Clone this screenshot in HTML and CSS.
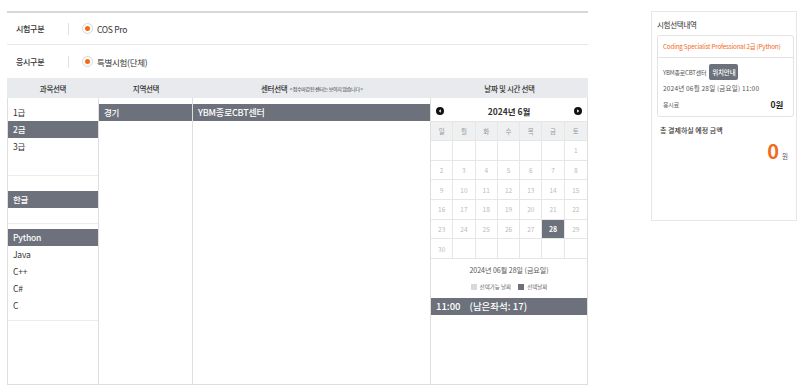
FILE: index.html
```html
<!doctype html>
<html>
<head>
<meta charset="utf-8">
<title>시험접수</title>
<link rel="stylesheet" href="styles.css">
</head>
<body>
<div class="wrap">
  <div class="main">
    <div class="opt-row">
      <div class="opt-label">시험구분</div>
      <div class="opt-value"><span class="radio"></span>COS Pro</div>
    </div>
    <div class="opt-row">
      <div class="opt-label">응시구분</div>
      <div class="opt-value"><span class="radio"></span>특별시험(단체)</div>
    </div>

    <div class="select-table">
      <div class="th">과목선택</div>
      <div class="th">지역선택</div>
      <div class="th">센터선택 <small>&lt; 접수마감된 센터는 보이지 않습니다 &gt;</small></div>
      <div class="th">날짜 및 시간 선택</div>

      <div class="td">
        <ul class="grp g1">
          <li>1급</li>
          <li class="on">2급</li>
          <li>3급</li>
        </ul>
        <ul class="grp g2">
          <li class="on">한글</li>
        </ul>
        <ul class="grp g3">
          <li class="on">Python</li>
          <li>Java</li>
          <li>C++</li>
          <li>C#</li>
          <li>C</li>
        </ul>
      </div>
      <div class="td">
        <ul class="grp g1">
          <li class="on">경기</li>
        </ul>
      </div>
      <div class="td">
        <ul class="grp g1">
          <li class="on big">YBM종로CBT센터</li>
        </ul>
      </div>
      <div class="td cal-col">
        <div class="cal-nav">
          <svg width="8" height="8" viewBox="0 0 8 8"><circle cx="4" cy="4" r="4" fill="#111"/><path d="M4.8 2.2 L2.8 4 L4.8 5.8 Z" fill="#fff"/></svg>
          <span>2024년 6월</span>
          <svg width="8" height="8" viewBox="0 0 8 8"><circle cx="4" cy="4" r="4" fill="#111"/><path d="M3.2 2.2 L5.2 4 L3.2 5.8 Z" fill="#fff"/></svg>
        </div>
        <div class="cal">
          <div class="wd">일</div><div class="wd">월</div><div class="wd">화</div><div class="wd">수</div><div class="wd">목</div><div class="wd">금</div><div class="wd">토</div>
          <div></div><div></div><div></div><div></div><div></div><div></div><div>1</div>
          <div>2</div><div>3</div><div>4</div><div>5</div><div>6</div><div>7</div><div>8</div>
          <div>9</div><div>10</div><div>11</div><div>12</div><div>13</div><div>14</div><div>15</div>
          <div>16</div><div>17</div><div>18</div><div>19</div><div>20</div><div>21</div><div>22</div>
          <div>23</div><div>24</div><div>25</div><div>26</div><div>27</div><div class="sel">28</div><div>29</div>
          <div>30</div><div></div><div></div><div></div><div></div><div></div><div></div>
        </div>
        <div class="cal-date">2024년 06월 28일 (금요일)</div>
        <div class="legend">
          <span class="sq"></span>선택가능 날짜
          <span class="sq dark"></span>선택날짜
        </div>
        <div class="time-slot">11:00<span>(남은좌석: 17)</span></div>
      </div>
    </div>
  </div>

  <div class="side">
    <div class="side-title">시험선택내역</div>
    <div class="card">
      <div class="card-head">Coding Specialist Professional 2급 (Python)</div>
      <div class="card-body">
        <div class="c-row">YBM종로CBT센터 <span class="btn">위치안내</span></div>
        <div class="c-row wide">2024년 06월 28일 (금요일) 11:00</div>
        <div class="c-row fee"><span>응시료</span><b>0원</b></div>
      </div>
    </div>
    <div class="total-label">총 결제하실 예정 금액</div>
    <div class="total"><b>0</b>원</div>
  </div>
</div>
</body>
</html>
```

FILE: styles.css
```css
body {
  margin: 0;
  font-family: "Noto Sans CJK KR", "Noto Sans", sans-serif;
  color: #333;
  background: #fff;
}
ul {
  margin: 0;
  padding: 0;
  list-style: none;
}
.wrap {
  display: flex;
  align-items: flex-start;
  padding-top: 11px;
}
.main {
  width: 581px;
  margin-left: 7px;
  border-top: 2px solid #d6d8db;
}

/* option rows */
.opt-row {
  display: flex;
  align-items: center;
  height: 31px;
  border-bottom: 1px solid #e8e8e8;
}
.opt-row + .opt-row {
  height: 33px;
  border-bottom: none;
}
.opt-label {
  width: 52px;
  padding-left: 9px;
  font-size: 8px;
  font-weight: 500;
  letter-spacing: -0.3px;
  border-right: 1px solid #e2e2e2;
  line-height: 12px;
}
.opt-value {
  display: flex;
  align-items: center;
  margin-left: 13px;
  font-size: 8.5px;
  letter-spacing: -0.3px;
}
.radio {
  width: 9px;
  height: 9px;
  border: 1px solid #d8d8d8;
  border-radius: 50%;
  margin-right: 4px;
  display: flex;
  align-items: center;
  justify-content: center;
  background: #fff;
}
.radio::after {
  content: "";
  width: 5px;
  height: 5px;
  border-radius: 50%;
  background: #f26b1d;
}

/* selection table */
.select-table {
  display: grid;
  grid-template-columns: 92px 94px 238px 157px;
  grid-template-rows: 20px 286px;
  border-bottom: 1px solid #dedede;
}
.th {
  background: #e8eaed;
  font-size: 7.5px;
  font-weight: 500;
  display: flex;
  align-items: center;
  justify-content: center;
  letter-spacing: -0.3px;
}
.th small {
  font-size: 5px;
  font-weight: 400;
  margin-left: 2px;
}
.td {
  border-right: 1px solid #dedede;
}
.td:nth-child(5) {
  border-left: 1px solid #dedede;
}
.grp li {
  height: 17px;
  line-height: 17px;
  padding-left: 5px;
  font-size: 8.5px;
  letter-spacing: -0.2px;
}
.grp li.on {
  background: #6c717b;
  color: #fff;
  font-weight: 500;
}
.grp li.big {
  font-size: 9px;
}
.g1 {
  padding: 6px 0 20px;
}
.g2 {
  border-top: 1px solid #ececec;
  padding: 15px 0 15px;
}
.g3 {
  border-top: 1px solid #ececec;
  padding: 5px 0 6px;
  border-bottom: 1px solid #ececec;
}

/* calendar */
.cal-nav {
  height: 23px;
  display: flex;
  align-items: center;
  justify-content: space-between;
  padding: 3px 5px 0 5px;
  box-sizing: border-box;
}
.cal-nav span {
  font-size: 8.5px;
  font-weight: 700;
}
.cal {
  display: grid;
  grid-template-columns: repeat(7, 1fr);
  grid-template-rows: 19px repeat(6, 19.67px);
  border-top: 1px solid #e6e6e6;
}
.cal div {
  border-right: 1px solid #e6e6e6;
  border-bottom: 1px solid #e6e6e6;
  font-size: 6.5px;
  color: #bbb;
  display: flex;
  align-items: center;
  justify-content: center;
}
.cal div:nth-child(7n) {
  border-right: none;
}
.cal .wd {
  background: #eef0f2;
  color: #999;
}
.cal .sel {
  background: #6c717b;
  color: #fff;
  font-weight: 700;
  font-size: 7px;
}
.cal-date {
  text-align: center;
  font-size: 7px;
  color: #555;
  padding-top: 6px;
  height: 16px;
}
.legend {
  display: flex;
  align-items: center;
  justify-content: center;
  font-size: 5.5px;
  color: #666;
  height: 13px;
}
.sq {
  width: 6px;
  height: 6px;
  background: #d9d9d9;
  margin-right: 3px;
}
.sq.dark {
  background: #6c717b;
  margin-left: 7px;
}
.time-slot {
  margin-top: 4px;
  height: 17px;
  line-height: 17px;
  background: #6c717b;
  color: #fff;
  font-size: 9.5px;
  font-weight: 500;
  padding-left: 5px;
}
.time-slot span {
  margin-left: 9px;
}

/* right panel */
.side {
  width: 146px;
  margin-left: 63px;
  height: 210px;
  border: 1px solid #e6e6e6;
  box-sizing: border-box;
  padding: 0 2px 0 5px;
}
.side-title {
  font-size: 7.5px;
  padding-top: 7px;
  height: 16px;
  letter-spacing: -0.3px;
}
.card {
  border: 1px solid #e3e3e3;
  border-radius: 3px;
  height: 82px;
  box-sizing: border-box;
}
.card-head {
  color: #f26b1d;
  font-size: 6.3px;
  letter-spacing: -0.2px;
  height: 21px;
  line-height: 21px;
  padding-left: 5px;
  border-bottom: 1px solid #e3e3e3;
}
.card-body {
  padding: 6px 5px 0 5px;
}
.c-row {
  font-size: 6px;
  color: #555;
  height: 16px;
  display: flex;
  align-items: center;
  letter-spacing: -0.2px;
}
.c-row.wide {
  font-size: 6.5px;
  letter-spacing: 0.2px;
}
.btn {
  background: #6c717b;
  color: #fff;
  font-weight: 500;
  font-size: 6.5px;
  padding: 3px 3px;
  border-radius: 2px;
  margin-left: 3px;
}
.fee {
  justify-content: space-between;
  padding-right: 5px;
}
.fee b {
  font-size: 8.5px;
  color: #222;
}
.total-label {
  font-size: 7px;
  font-weight: 500;
  padding: 8px 0 0 3px;
  height: 11px;
}
.total {
  text-align: right;
  padding-right: 6px;
  font-size: 6.5px;
  color: #555;
}
.total b {
  color: #f26b1d;
  font-size: 20px;
  margin-right: 3px;
}
```
